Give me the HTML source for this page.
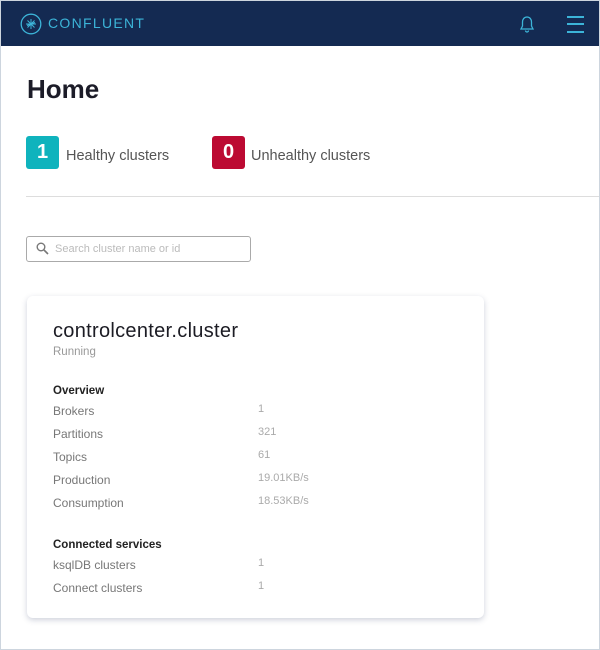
<!DOCTYPE html>
<html><head><meta charset="utf-8"><style>
*{margin:0;padding:0;box-sizing:border-box}
body{width:600px;height:650px;overflow:hidden;background:#fff;font-family:"Liberation Sans",sans-serif;position:relative}
.frame{position:absolute;left:0;top:0;width:600px;height:650px;border:1px solid #cdd5de;pointer-events:none}
.hdr{position:absolute;left:0;top:0;width:600px;height:46px;background:#142a52;border:1px solid #3a4c6c;border-bottom:none}
.abs{position:absolute;white-space:nowrap}
.badge{position:absolute;width:33px;height:33px;border-radius:3px;color:#fff;font-weight:bold;font-size:20px;text-align:center;line-height:33px}
.lbl{font-size:14.5px;color:#555}
.card{position:absolute;left:27px;top:296px;width:457px;height:322px;background:#fff;border-radius:6px;box-shadow:0 2px 6px rgba(60,70,110,.25)}
.k{font-size:12px;color:#777}
.v{font-size:11px;color:#aaa}
.h{font-size:11.5px;color:#222;font-weight:bold}
</style></head><body>
<div class="hdr">
<svg class="abs" style="left:19px;top:12px" width="22" height="22" viewBox="0 0 22 22"><circle cx="11" cy="11" r="9.8" fill="none" stroke="#3cb4d8" stroke-width="1.3"/><path d="M11 6v10M6 11h10M7.5 7.5l7 7M14.5 7.5l-7 7M11 11l-4 1.5M11 11l4-1.5" stroke="#3cb4d8" stroke-width="1"/></svg>
<div class="abs" style="left:47px;top:14px;font-size:14px;letter-spacing:1.3px;color:#3cb4d8">CONFLUENT</div>
<svg class="abs" style="left:518px;top:14px" width="16" height="19" viewBox="0 0 16 19"><path d="M8 2C5 2 3.5 4.5 3.5 7v4L2 14h12l-1.5-3V7C12.5 4.5 11 2 8 2zM6.5 15.5a1.5 1.5 0 0 0 3 0" fill="none" stroke="#3cb4d8" stroke-width="1.3"/></svg>
<div class="abs" style="left:566px;top:15px;width:17px;height:1.5px;background:#3cb4d8"></div>
<div class="abs" style="left:566px;top:22px;width:17px;height:1.5px;background:#3cb4d8"></div>
<div class="abs" style="left:566px;top:30px;width:17px;height:1.5px;background:#3cb4d8"></div>
</div>
<div class="abs" style="left:27px;top:74px;font-size:26px;font-weight:bold;color:#1c1c28">Home</div>
<div class="badge" style="left:26px;top:136px;background:#0fb3bd">1</div>
<div class="abs lbl" style="left:66px;top:148px">Healthy clusters</div>
<div class="badge" style="left:212px;top:136px;background:#bc0a32">0</div>
<div class="abs lbl" style="left:251px;top:148px">Unhealthy clusters</div>
<div class="abs" style="left:26px;top:196px;width:574px;height:1px;background:#ddd"></div>
<div class="abs" style="left:26px;top:236px;width:225px;height:26px;border:1px solid #aaa;border-radius:3px"></div>
<svg class="abs" style="left:36px;top:242px" width="13" height="13" viewBox="0 0 13 13"><circle cx="5" cy="5" r="3.8" fill="none" stroke="#777" stroke-width="1.4"/><path d="M8 8l4 4" stroke="#777" stroke-width="1.6"/></svg>
<div class="abs" style="left:55px;top:243px;font-size:11px;color:#bbb">Search cluster name or id</div>
<div class="card">
<div class="abs" style="left:26px;top:24px;font-size:20px;letter-spacing:0.3px;color:#1c1c24">controlcenter.cluster</div>
<div class="abs" style="left:26px;top:50px;font-size:11.5px;color:#999">Running</div>
<div class="abs h" style="left:26px;top:89px">Overview</div>
<div class="abs k" style="left:26px;top:108px">Brokers</div><div class="abs v" style="left:231px;top:107px">1</div>
<div class="abs k" style="left:26px;top:131px">Partitions</div><div class="abs v" style="left:231px;top:130px">321</div>
<div class="abs k" style="left:26px;top:154px">Topics</div><div class="abs v" style="left:231px;top:153px">61</div>
<div class="abs k" style="left:26px;top:177px">Production</div><div class="abs v" style="left:231px;top:176px">19.01KB/s</div>
<div class="abs k" style="left:26px;top:200px">Consumption</div><div class="abs v" style="left:231px;top:199px">18.53KB/s</div>
<div class="abs h" style="left:26px;top:243px">Connected services</div>
<div class="abs k" style="left:26px;top:262px">ksqlDB clusters</div><div class="abs v" style="left:231px;top:261px">1</div>
<div class="abs k" style="left:26px;top:285px">Connect clusters</div><div class="abs v" style="left:231px;top:284px">1</div>
</div>
<div class="frame"></div>
</body></html>
